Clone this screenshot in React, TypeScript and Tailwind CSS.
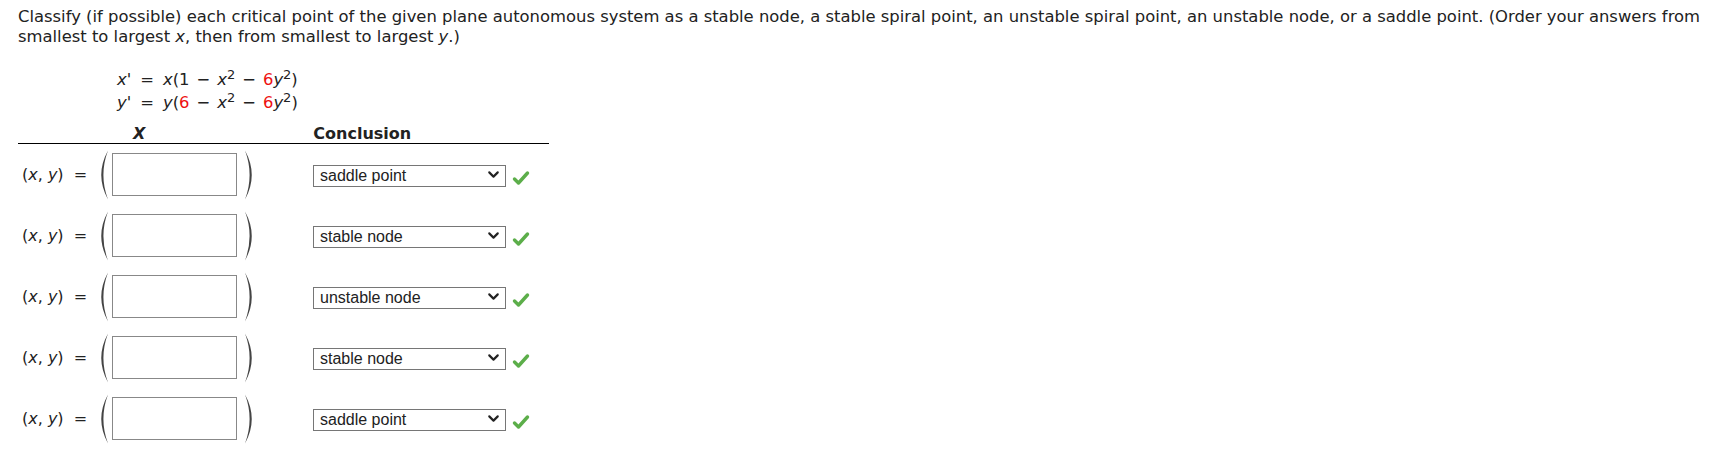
import { ChevronDown } from 'lucide-react';

const rows = ['saddle point', 'stable node', 'unstable node', 'stable node', 'saddle point'];

function Paren({ side }: { side: 'left' | 'right' }) {
  // tall bracket drawn as a crescent
  const d =
    side === 'left'
      ? 'M11 0.5 Q-2.5 25 11 49.5 Q1.8 25 11 0.5 Z'
      : 'M1 0.5 Q14.5 25 1 49.5 Q10.2 25 1 0.5 Z';
  return (
    <svg width="12" height="50" viewBox="0 0 12 50" className="shrink-0">
      <path d={d} fill="#444" />
    </svg>
  );
}

function Check() {
  return (
    <svg width="18" height="16" viewBox="0 0 18 16" className="shrink-0 mt-[6px]">
      <path d="M2.5 9 L6.5 13 L15.5 3" fill="none" stroke="#5cae4a" strokeWidth="3.4" strokeLinecap="round" strokeLinejoin="round" />
    </svg>
  );
}

function Minus() {
  return <span className="mx-[7px]">−</span>;
}

function Sq() {
  return <sup className="text-[13px]">2</sup>;
}

export default function App() {
  return (
    <div className="min-h-[474px] bg-white pl-[18px] pt-[7px] text-[#222] font-['DejaVu_Sans',Verdana,sans-serif] text-[16.4px]">
      {/* Question text */}
      <p className="leading-[20px] whitespace-nowrap">
        Classify (if possible) each critical point of the given plane autonomous system as a stable node, a stable spiral point, an unstable spiral point, an unstable node, or a saddle point. (Order your answers from
        <br />
        smallest to largest <i>x</i>, then from smallest to largest <i>y</i>.)
      </p>

      {/* System */}
      <div className="mt-[21px] ml-[99px] leading-[23px] whitespace-nowrap">
        <div>
          <i>x</i><i>'</i>
          <span className="ml-[9px]">=</span>
          <span className="ml-[9px]">
            <i>x</i>(1<Minus /><i>x</i><Sq /><Minus /><span className="text-[#ee1111]">6</span><i>y</i><Sq />)
          </span>
        </div>
        <div>
          <i>y</i><i>'</i>
          <span className="ml-[9px]">=</span>
          <span className="ml-[9px]">
            <i>y</i>(<span className="text-[#ee1111]">6</span><Minus /><i>x</i><Sq /><Minus /><span className="text-[#ee1111]">6</span><i>y</i><Sq />)
          </span>
        </div>
      </div>

      {/* Table header */}
      <div className="mt-[11px] w-[531px] flex items-end border-b border-black h-[19px] leading-[18px] font-bold text-[16px]">
        <span className="ml-[115px] italic">X</span>
        <span className="ml-[168px]">Conclusion</span>
      </div>

      {/* Rows */}
      <div className="flex flex-col">
        {rows.map((value, i) => (
          <div key={i} className="flex items-center h-[61px]">
            <span className="ml-[4px] w-[75px] whitespace-nowrap text-[16px]">
              (<i>x</i>, <i>y</i>)&nbsp; =
            </span>
            <Paren side="left" />
            <input
              type="text"
              className="ml-[3px] w-[125px] h-[43px] border border-[#888] bg-white outline-none"
            />
            <div className="ml-[7px]">
              <Paren side="right" />
            </div>
            <div className="ml-[57px] relative w-[193px] h-[22px]">
              <select
                defaultValue={value}
                className="appearance-none w-full h-full border border-[#767676] bg-white pl-[6px] pr-6 text-[16px] leading-[20px] text-[#222] font-['Liberation_Sans',Arial,sans-serif]"
              >
                <option>stable node</option>
                <option>stable spiral point</option>
                <option>unstable spiral point</option>
                <option>unstable node</option>
                <option>saddle point</option>
              </select>
              <ChevronDown
                size={17}
                strokeWidth={3}
                className="absolute right-[4px] top-[2.5px] text-[#222] pointer-events-none"
              />
            </div>
            <div className="ml-[6px]">
              <Check />
            </div>
          </div>
        ))}
      </div>
    </div>
  );
}
